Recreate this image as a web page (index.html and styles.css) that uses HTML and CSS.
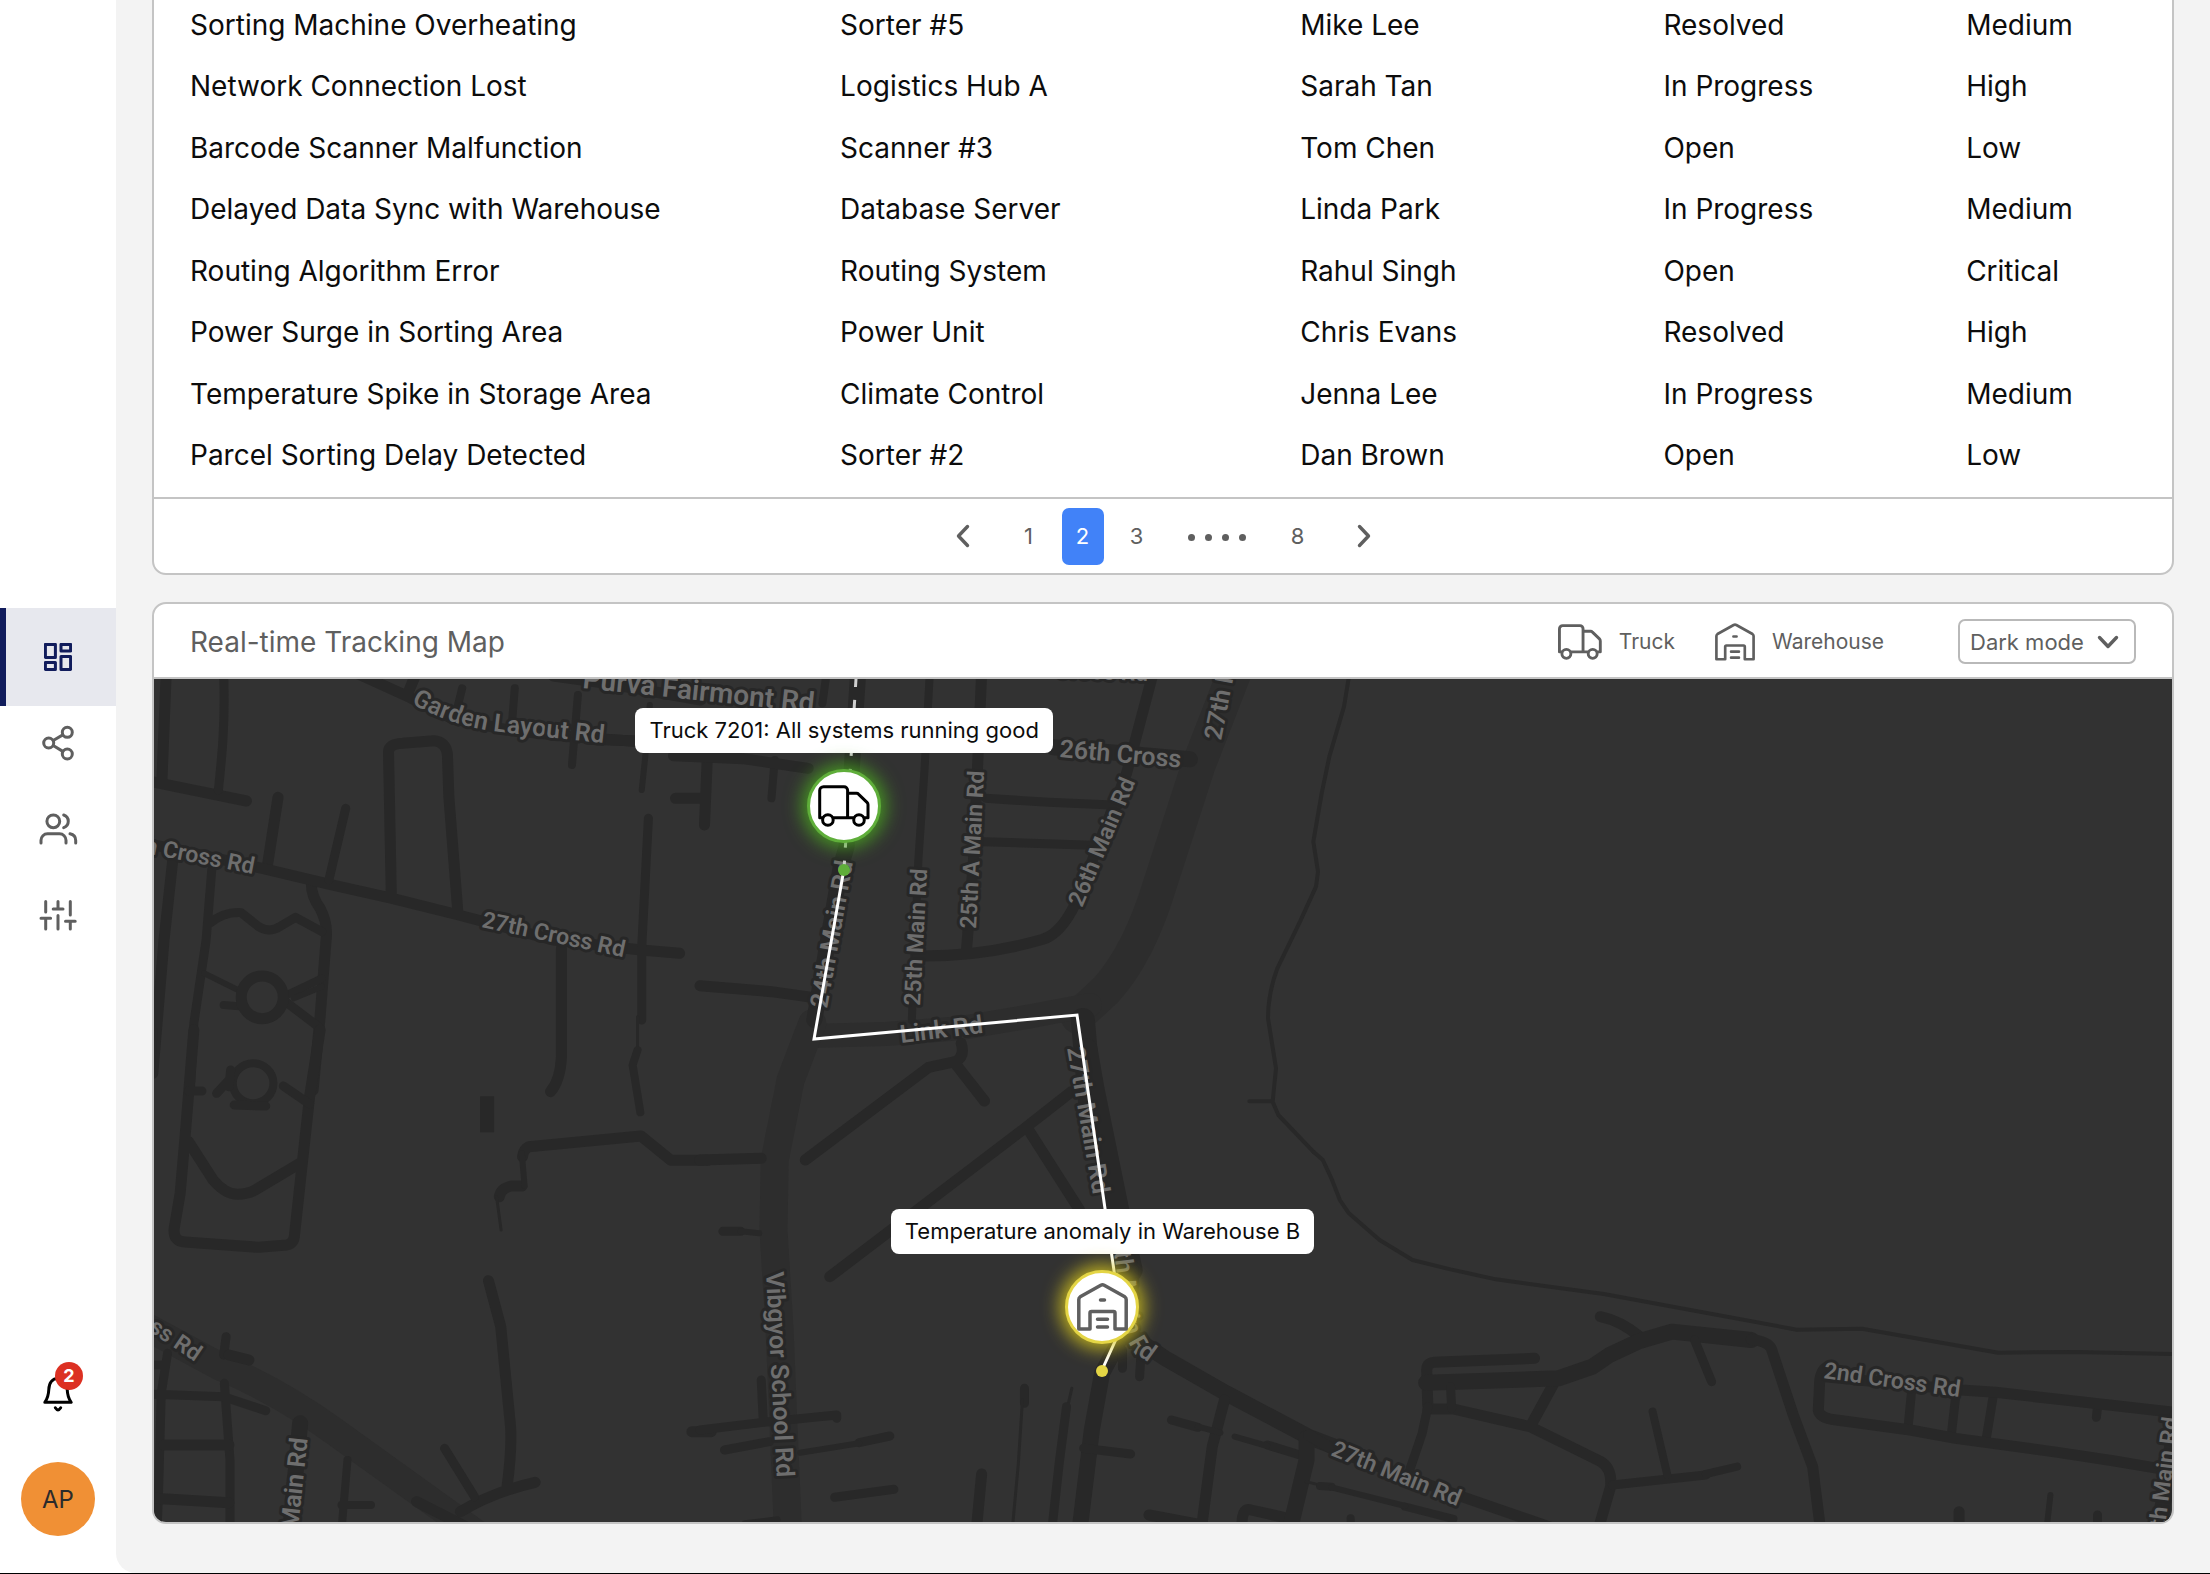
FILE: index.html
```html
<!DOCTYPE html>
<html lang="en">
<head>
<meta charset="utf-8">
<meta name="viewport" content="width=device-width, initial-scale=1">
<title>Operations dashboard</title>
<link rel="stylesheet" href="styles.css">
</head>
<body>
<svg class="sprite" aria-hidden="true">
  <symbol id="truck" viewBox="0 0 52 42">
    <path d="M4.500 32.700H1.700V5.500a3.800 3.800 0 0 1 3.800-3.800H26a3.600 3.600 0 0 1 3.600 3.600V32.700M29.600 8.300H38.500Q39.800 8.300 40.700 9.300L49 17.300Q50 18.300 50 19.800V32.700H46.800M15.500 32.700H35.200"/>
    <circle cx="9.900" cy="35" r="5.300"/><circle cx="41" cy="35" r="5.300"/>
  </symbol>
  <symbol id="warehouse" viewBox="0 0 51 48">
    <path d="M1.800 46V16.500Q1.800 14.800 3.200 13.800L23.800 2.300Q25.500 1.400 27.200 2.300L47.800 13.800Q49.200 14.800 49.200 16.500V46H38V30Q38 28.500 36.500 28.500H14.500Q13 28.500 13 30V46ZM23.500 17H27.500M20.500 36.300H30.500M20.500 44H30.500"/>
  </symbol>
</svg>

<aside class="sidebar">
  <nav class="nav" aria-label="Primary">
    <a class="nav-item is-active" href="#dashboard" aria-label="Dashboard" aria-current="page">
      <svg class="icon" width="28" height="28" viewBox="0 0 28 28"><rect x="1.400" y="1.400" width="10" height="13"/><rect x="17" y="1.400" width="9.600" height="6.600"/><rect x="1.400" y="19.400" width="10" height="7"/><rect x="17" y="13.600" width="9.600" height="12.800"/></svg>
    </a>
    <a class="nav-item" href="#network" aria-label="Network">
      <svg class="icon" width="36" height="36" viewBox="0 0 36 36"><circle cx="27.300" cy="7.300" r="5"/><circle cx="8.700" cy="18" r="5"/><circle cx="27.300" cy="29" r="5"/><path d="M13.200 15.500 22.800 9.900M13.200 20.500 22.800 26.400"/></svg>
    </a>
    <a class="nav-item" href="#team" aria-label="Team">
      <svg class="icon" width="40" height="36" viewBox="0 0 40 36"><circle cx="15.300" cy="10.300" r="6.400"/><path d="M25.700 4a6.700 6.700 0 0 1 0 12.700M3 32v-2.700a6.500 6.500 0 0 1 6.500-6.500h12a6.500 6.500 0 0 1 6.500 6.500V32M32 22.800c3.700.8 5.700 3.200 5.700 6.700V32"/></svg>
    </a>
    <a class="nav-item" href="#settings" aria-label="Settings">
      <svg class="icon" width="40" height="36" viewBox="0 0 40 36"><path d="M7.700 4.500V15M3 21.300H12.600M7.700 21.300V32M20 4.500V12M15.200 12H25M20 18.500V32M32.300 4.500V18M27.500 24.300H37.200M32.300 24.300V32"/></svg>
    </a>
  </nav>
  <div class="account">
    <button class="bell" type="button" aria-label="Notifications">
      <svg class="icon" width="36" height="42" viewBox="0 0 36 42"><path d="M4.800 30.300C8 26 8.600 22 8.800 17.500 9 10.500 12.500 6.500 18 6.500s9 4 9.200 11c.2 4.500.8 8.500 4 12.800ZM15.300 35.800q2.700 4.200 5.400 0"/></svg>
      <span class="badge">2</span>
    </button>
    <button class="avatar" type="button">AP</button>
  </div>
</aside>

<main class="content">
  <section class="card incidents">
    <table class="table">
      <colgroup><col class="c-issue"><col class="c-asset"><col class="c-owner"><col class="c-status"><col></colgroup>
      <tbody>
        <tr><td>Sorting Machine Overheating</td><td>Sorter #5</td><td>Mike Lee</td><td>Resolved</td><td>Medium</td></tr>
        <tr><td>Network Connection Lost</td><td>Logistics Hub A</td><td>Sarah Tan</td><td>In Progress</td><td>High</td></tr>
        <tr><td>Barcode Scanner Malfunction</td><td>Scanner #3</td><td>Tom Chen</td><td>Open</td><td>Low</td></tr>
        <tr><td>Delayed Data Sync with Warehouse</td><td>Database Server</td><td>Linda Park</td><td>In Progress</td><td>Medium</td></tr>
        <tr><td>Routing Algorithm Error</td><td>Routing System</td><td>Rahul Singh</td><td>Open</td><td>Critical</td></tr>
        <tr><td>Power Surge in Sorting Area</td><td>Power Unit</td><td>Chris Evans</td><td>Resolved</td><td>High</td></tr>
        <tr><td>Temperature Spike in Storage Area</td><td>Climate Control</td><td>Jenna Lee</td><td>In Progress</td><td>Medium</td></tr>
        <tr><td>Parcel Sorting Delay Detected</td><td>Sorter #2</td><td>Dan Brown</td><td>Open</td><td>Low</td></tr>
      </tbody>
    </table>
    <nav class="pager" aria-label="Pagination">
      <button class="page" type="button" aria-label="Previous page"><svg class="icon chevron" width="14" height="24" viewBox="0 0 14 24"><path d="M11.500 2.500 2.500 12l9 9.500"/></svg></button>
      <div class="pages">
        <button class="page" type="button">1</button>
        <button class="page is-current" type="button" aria-current="page">2</button>
        <button class="page" type="button">3</button>
        <span class="dots" aria-hidden="true"><i></i><i></i><i></i><i></i></span>
        <button class="page" type="button">8</button>
      </div>
      <button class="page" type="button" aria-label="Next page"><svg class="icon chevron" width="14" height="24" viewBox="0 0 14 24"><path d="M2.500 2.500 11.500 12l-9 9.500"/></svg></button>
    </nav>
  </section>

  <section class="card">
    <header class="map-header">
      <h2 class="title">Real-time Tracking Map</h2>
      <div class="legend">
        <span class="legend-item"><svg class="icon" width="44" height="36"><use href="#truck"/></svg>Truck</span>
        <span class="legend-item"><svg class="icon" width="40" height="38"><use href="#warehouse"/></svg>Warehouse</span>
      </div>
      <div class="select">
        <select aria-label="Map theme"><option>Dark mode</option><option>Light mode</option></select>
        <svg class="icon chevron" width="22" height="14" viewBox="0 0 22 14"><path d="M2.500 2.500 11 11.500 19.500 2.500"/></svg>
      </div>
    </header>
    <div class="map">
      <svg class="map-canvas" viewBox="154 679 2018 843" preserveAspectRatio="xMidYMid slice" role="img" aria-label="Street map">
        <!-- arterial roads -->
        <g class="road major">
          <g transform="translate(600 660) scale(.40816 .33333)">
            <path class="w34" d="M1560 20 1465 320 1370 680Q1320 880 1240 990L1170 1070"/>
            <path class="w24" d="M510 1128 700 1122 880 1105 1050 1070 1200 1035"/>
          </g>
          <g transform="translate(700 1030) scale(.40816 .33333)">
            <path class="w28" d="M275-20 222 150 183 390 180 600 195 900 205 1200 215 1490"/>
          </g>
          <g transform="translate(150 1030) scale(.35075 .33333)">
            <path class="w28" d="M-20 885 200 1010Q360 1080 520 1200L930 1510"/>
          </g>
        </g>

        <!-- north-west block -->
        <g class="road" transform="translate(150 590) scale(.35075 .33333)">
          <path class="w11" d="M46 255 34 570M-10 572 275 633M365 622 335 825M460 880Q460 920 485 955 508 1000 502 1050L485 1280 465 1500"/>
          <path class="w11" d="M-10 760 320 835 500 880 690 925 880 975 1150 1050 1400 1080 1510 1090M688 920 680 485Q682 462 720 460L810 452Q845 457 848 495L852 620 878 970M66 800 40 1050 8 1450"/>
          <path class="w9" d="M210 255C215 400 205 500 195 600M558 655 510 870M176 840 160 1050 125 1300 115 1500M170 1000Q210 965 260 968L310 1010Q340 1030 370 1010L415 982 490 1025"/>
          <path class="w11" d="M590 250 740 322 860 385 1020 420 1200 440 1400 455 1570 485M1150 258 1300 280 1570 330M755 260 735 310"/>
          <path class="w8" d="M890 295 870 380M1040 295 1032 400M1220 315 1203 525M390 1215 490 1165M210 1245 270 1250"/>
          <path class="w6" d="M1425 345 1412 500 1402 600M155 1150 260 1205M410 1225 490 1190"/>
          <path class="w9" d="M1421 685 1402 1070 1402 1290M380 1230 480 1310"/>
          <path class="w11" d="M1173 1075V1400Q1170 1470 1142 1505"/>
          <path class="w3" d="M1390 1280V1380"/>
          <ellipse class="w11" cx="320" cy="1222" rx="60" ry="64"/>
          <ellipse class="w8" cx="294" cy="1480" rx="58" ry="60"/>
        </g>

        <!-- south-west block -->
        <g class="road" transform="translate(150 1030) scale(.35075 .33333)">
          <path class="w3" d="M18 0 8 140"/>
          <path class="w11" d="M125 0 100 320 86 490 69 595Q65 635 100 636L310 652 390 645Q411 640 412 615L430 440 455 200 485 0M110 335 180 450Q215 493 250 493 280 492 300 480L430 398"/>
          <path class="w9" d="M380 168 455 222M110 183H148M190 190 225 150M230 120 225 170M240 225 330 228"/>
          <path class="square" d="M941 199h40v108h-40z"/>
          <path class="w8" d="M1390 60 1376 105 1398 247"/>
          <path class="w11" d="M1590 391H1485L1400 318 1080 350Q1064 358 1062 380M1060 468 1030 468Q1000 475 996 500M965 752 1000 890 1028 1190Q1032 1260 1018 1370M885 1445Q980 1385 1098 1357"/>
          <path class="w6" d="M1060 370 1068 468"/>
          <path class="w3" d="M988 500 1001 600"/>
          <path class="w9" d="M840 1255 925 1400M217 920 210 975M50 970 32 1090 24 1400 20 1500M0 1005H40M0 1092 210 1100 330 1142M212 1060 228 1290V1500"/>
          <path class="w11" d="M225 975 282 990M40 1245H225M10 1405 225 1418M760 1415 900 1490M1545 1205H1600"/>
          <path class="w16" d="M428 1180 400 1500"/>
          <path class="w8" d="M563 1290 546 1500M546 1425H630"/>
        </g>

        <!-- central block, north -->
        <g class="road" transform="translate(600 660) scale(.40816 .33333)">
          <path class="w16" d="M633 30 604 560 590 620 525 1080M1110 262 1445 298"/>
          <path class="w8" d="M555 40 545 130M808 40 795 330 780 600 764 1080M428 300 420 415"/>
          <path class="w11" d="M935 40 915 600 898 870M1355 40 1290 340 1165 730Q1130 820 1085 838 940 890 780 888M185 415H255M263 290 256 495M245 977 420 995 520 1012M-30 238 95 243"/>
          <path class="w9" d="M945 415 1100 427 1270 436M940 545 1205 556"/>
          <path class="w11" d="M180 287 350 296 510 325"/>
          <path class="w24" d="M1183 1080 1206 1400"/>
        </g>

        <!-- central block, south -->
        <g class="road" transform="translate(700 1030) scale(.40816 .33333)">
          <path class="w11" d="M0 390 150 385M258 390 560 112 625 95Q650 80 640 40M625 100 697 213M910 185 790 300 318 740M805 300 930 540"/>
          <path class="w24" d="M945 60 962 180 1022 540 1055 720"/>
          <path class="w16" d="M1055 720V850L1020 950 985 1030 960 1200 930 1500M1060 920 1140 985 1290 1090 1490 1220 1640 1290"/>
          <path class="w9" d="M1035 960V1015M1080 980 1077 1040M56 604H100M150 1050 155 1170M0 1200 170 1175 335 1155V1165M60 1260 170 1235M390 1238 465 1218M330 1402 475 1378M795 1075V1120M1155 1170 1220 1192M1390 1245 1470 1275M940 1255 1055 1272"/>
          <path class="w11" d="M1285 1110 1255 1250 1228 1500M690 1332 677 1500M1100 1455 1230 1485M1328 1500Q1325 1430 1350 1440L1430 1462"/>
          <path class="w16" d="M1486 1225V1290L1445 1500"/>
          <path class="w6" d="M100 604 145 610M245 1268 390 1240M110 1480 190 1468M1220 1190 1275 1208M1310 1220 1390 1248"/>
          <path class="w3" d="M790 1110 780 1300 765 1500M1485 1355 1600 1390M911 1075 895 1160"/>
          <path class="w9" d="M898 1130 880 1300 862 1500"/>
        </g>

        <!-- boundary track -->
        <g class="road" transform="translate(1240 670) scale(.33333)">
          <path class="w4" d="M330 0 312 110 268 260 245 370 220 515 234 605 228 650 180 755 112 895Q84 970 84 1045L108 1195 98 1295 115 1335 222 1447M28 1294H98"/>
        </g>

        <!-- south-east block -->
        <g class="road" transform="translate(1320 1200) scale(.56754 .33333)">
          <path class="w4" d="M-11-144 5-120 20-65 35 0 50 38 105 120 163 180 230 208 310 238 500 282 840 389 955 386 1195 458 1330 456 1520 463"/>
          <path class="w11" d="M494 350Q530 362 565 412M378 475 200 487Q188 490 188 510L190 620M190 627H235L370 680 495 785Q515 805 512 860L490 990M412 550 372 675M-20 705 30 755 250 890 420 990"/>
          <path class="w16" d="M187 548 420 535 480 500 510 465 560 425 620 395 760 420"/>
          <path class="w11" d="M760 418Q790 425 795 445L835 650 868 800 882 990"/>
          <path class="w9" d="M230 560 232 625M190 620 180 700 158 810M660 420 690 545M515 855 680 825M1042 580 1036 685M1120 590 1112 710M1186 590 1174 715M1370 620 1368 652M1370 945V990"/>
          <path class="w8" d="M586 635 612 825M680 822 735 800M0 858 20 860M150 920 235 957M54 955V990"/>
          <path class="w6" d="M20 862 150 918M1287 885 1280 990"/>
          <path class="w11" d="M895 500Q880 510 880 560L878 630Q880 655 910 660L1040 690 1120 715 1300 757 1400 783 1500 812M890 530 1130 570 1190 577 1340 605 1520 640M1126 935V990"/>
          <path class="w16" d="M1510 650 1478 990"/>
        </g>

        <defs>
          <path id="p-garden" d="M411 703Q450 726 500 732L640 747"/>
          <path id="p-main-s" d="M1114 1252 1119 1290Q1122 1335 1134 1352L1180 1385"/>
        </defs>
        <g class="labels">
          <text class="lg" transform="translate(582 688) rotate(6)">Purva Fairmont Rd</text>
          <text class="md"><textPath href="#p-garden">Garden Layout Rd</textPath></text>
          <text transform="translate(481 927) rotate(12)">27th Cross Rd</text>
          <text transform="translate(253 874) rotate(11)" text-anchor="end">h Cross Rd</text>
          <text class="md" transform="translate(827 1009) rotate(-80)">24th Main Rd</text>
          <text transform="translate(920 1006) rotate(-87)">25th Main Rd</text>
          <text transform="translate(976 929) rotate(-87)">25th A Main Rd</text>
          <text transform="translate(1082 908) rotate(-67)">26th Main Rd</text>
          <text class="md" transform="translate(1221 741) rotate(-79)">27th Main</text>
          <text class="md" transform="translate(1059 757) rotate(5)">26th Cross</text>
          <text transform="translate(1148 681) rotate(2)" text-anchor="end">Cross Rd</text>
          <text class="md" transform="translate(901 1043) rotate(-7)">Link Rd</text>
          <text class="md" transform="translate(1067 1048) rotate(80)">27th Main Rd</text>
          <text class="md"><textPath href="#p-main-s">th Main Rd</textPath></text>
          <text class="md" transform="translate(766 1272) rotate(87)">Vibgyor School Rd</text>
          <text transform="translate(1330 1455) rotate(22)">27th Main Rd</text>
          <text transform="translate(1823 1378) rotate(8)">2nd Cross Rd</text>
          <text transform="translate(2165 1528) rotate(-83)">th Main Rd</text>
          <text class="md" transform="translate(298 1530) rotate(-84)">Main Rd</text>
          <text transform="translate(195 1362) rotate(34)" text-anchor="end">ss Rd</text>
        </g>
        <path class="planned" d="M856 679 844 869"/>
        <path class="route" d="M844 869 814 1039 1077 1015 1122 1326 1102 1370"/>
      </svg>

      <div class="pin pin-truck">
        <span class="tip">Truck 7201: All systems running good</span>
        <span class="disc"><svg class="icon" width="52" height="42"><use href="#truck"/></svg></span>
        <span class="dot"></span>
      </div>
      <div class="pin pin-warehouse">
        <span class="tip">Temperature anomaly in Warehouse B</span>
        <span class="disc"><svg class="icon" width="51" height="48"><use href="#warehouse"/></svg></span>
        <span class="dot"></span>
      </div>
    </div>
  </section>
</main>
</body>
</html>
```
FILE: styles.css
```css
:root {
  --line: #c4c4c4;
  --grey: #5f5f5f;
  --ink: #0c0c0c;
  --navy: #111c5c;
  --blue: #4182f8;
}

* { box-sizing: border-box; }

body {
  margin: 0;
  height: 100vh;
  overflow: hidden;
  display: grid;
  grid-template-columns: 116px minmax(0, 1fr);
  border-bottom: 1px solid #000;
  background: #fff;
  color: var(--ink);
  font-family: Inter, "Liberation Sans", sans-serif;
}

button, select {
  margin: 0;
  padding: 0;
  border: 0;
  background: none;
  color: inherit;
  font: inherit;
}

.sprite { position: absolute; width: 0; height: 0; }

.icon {
  display: block;
  fill: none;
  stroke: currentColor;
  stroke-width: 3;
  stroke-linecap: round;
  stroke-linejoin: round;
}

.chevron { stroke-width: 3.400; }

/* Sidebar */
.sidebar {
  display: grid;
  grid-template-rows: 1fr auto 1fr;
  min-height: 0;
  padding-bottom: 1px;
}

.nav { grid-row: 2; }

.nav-item {
  display: flex;
  align-items: center;
  justify-content: center;
  height: 86px;
  color: var(--grey);
}

.nav-item.is-active {
  height: 98px;
  margin: -6px 0;
  background: #e7e8ee;
  color: var(--navy);
  box-shadow: inset 6px 0 var(--navy);
}

.account {
  grid-row: 3;
  display: flex;
  flex-direction: column;
  align-items: center;
  justify-content: flex-end;
  gap: 48px;
  padding-bottom: 36px;
}

.bell { position: relative; color: #000; }

.badge {
  position: absolute;
  left: 15px;
  top: -10px;
  width: 28px;
  height: 28px;
  border-radius: 50%;
  background: #dc3022;
  color: #fff;
  font-size: 18px;
  font-weight: 700;
  line-height: 28px;
  text-align: center;
}

.avatar {
  width: 74px;
  height: 74px;
  border-radius: 50%;
  background: #f09035;
  color: #2b2b2b;
  font-size: 24px;
  font-weight: 400;
}

/* Content */
.content {
  display: flex;
  flex-direction: column;
  justify-content: flex-end;
  gap: 27px;
  min-height: 0;
  overflow: hidden;
  padding: 0 36px 49px;
  border-bottom-left-radius: 20px;
  background: #f3f3f3;
}

.card {
  flex: none;
  overflow: hidden;
  border: 2px solid var(--line);
  border-radius: 14px;
  background: #fff;
}

.incidents { padding-top: 16px; }

.table {
  width: 100%;
  height: 492px;
  margin-bottom: 11px;
  border-collapse: collapse;
  table-layout: fixed;
  font-size: 28px;
  line-height: 36px;
}

.table td { padding: 0; }
.table td:first-child { padding-left: 36px; }
.c-issue { width: 34%; }
.c-asset { width: 22.800%; }
.c-owner { width: 18%; }
.c-status { width: 15%; }

.pager {
  display: flex;
  align-items: center;
  justify-content: center;
  gap: 24px;
  height: 76px;
  border-top: 2px solid var(--line);
  color: var(--grey);
  font-size: 22px;
}

.pages { display: flex; gap: 12px; }

.page {
  display: flex;
  align-items: center;
  justify-content: center;
  width: 42px;
  height: 57px;
  border-radius: 7px;
}

.page.is-current { background: var(--blue); color: #fff; }

.dots {
  display: flex;
  align-items: center;
  justify-content: center;
  gap: 10px;
  width: 95px;
  padding-top: 2px;
}

.dots i {
  width: 7px;
  height: 7px;
  border-radius: 50%;
  background: var(--grey);
}

/* Map card */
.map-header {
  display: flex;
  align-items: center;
  height: 75px;
  padding: 2px 36px 0;
  border-bottom: 2px solid var(--line);
  color: var(--grey);
  font-size: 21px;
}

.title {
  margin: 0 auto 0 0;
  font-size: 28px;
  font-weight: 400;
}

.legend { display: flex; gap: 40px; margin-right: 74px; }
.legend-item { display: flex; align-items: center; gap: 17px; }
.legend .icon { stroke-width: 3.400; }

.select { display: grid; align-items: center; }

.select select {
  grid-area: 1 / 1;
  width: 178px;
  height: 45px;
  padding-left: 10px;
  border: 2px solid #b9b9b9;
  border-radius: 7px;
  font-size: 22px;
  appearance: none;
}

.select .icon {
  grid-area: 1 / 1;
  justify-self: end;
  margin-right: 17px;
  pointer-events: none;
}

.map {
  position: relative;
  aspect-ratio: 2018 / 843;
  background: #323232;
}

.map-canvas { display: block; width: 100%; height: 100%; }

.road {
  fill: none;
  stroke: #282828;
  stroke-linecap: round;
  stroke-linejoin: round;
}

.road path, .road ellipse { vector-effect: non-scaling-stroke; }
.road.major { stroke: #2d2d2d; }
.road .square { fill: #282828; stroke: none; }
.w3 { stroke-width: 3px; }
.w4 { stroke-width: 4px; }
.w6 { stroke-width: 6px; }
.w8 { stroke-width: 8px; }
.w9 { stroke-width: 9px; }
.w11 { stroke-width: 11px; }
.w16 { stroke-width: 16px; }
.w24 { stroke-width: 24px; }
.w28 { stroke-width: 28px; }
.w34 { stroke-width: 34px; }

.labels {
  fill: #6e6e6e;
  stroke: #272727;
  stroke-width: 6px;
  stroke-linejoin: round;
  paint-order: stroke;
  font-family: Roboto, "Liberation Sans", sans-serif;
  font-size: 23px;
  font-weight: 600;
}

.labels .md { font-size: 25px; }
.labels .lg { font-size: 28px; }

.route { fill: none; stroke: #fff; stroke-width: 3px; }

.planned {
  fill: none;
  stroke: #cfcfcf;
  stroke-width: 3px;
  stroke-dasharray: 10 13;
  stroke-dashoffset: 2px;
}

/* Pins sit on the map at a share of its width and height */
.pin {
  position: absolute;
  display: flex;
  flex-direction: column;
  align-items: center;
  width: 0;
  --tone: #5fae3a;
  --glow: rgba(76, 175, 31, .8);
}

.pin-truck { left: 34.200%; top: 3.400%; }

.pin-warehouse {
  left: 47%;
  top: 62.900%;
  --tone: #e4d545;
  --glow: rgba(216, 200, 28, .85);
}

.tip {
  padding: 0 14px;
  border-radius: 8px;
  background: #fff;
  color: var(--ink);
  font-size: 22px;
  line-height: 45px;
  white-space: nowrap;
}

.disc {
  display: flex;
  flex: none;
  align-items: center;
  justify-content: center;
  width: 74px;
  height: 74px;
  margin: 16px 0 21px;
  border: 3px solid var(--tone);
  border-radius: 50%;
  background: #fff;
  box-shadow: 0 0 18px 5px var(--glow);
  color: #000;
}

.pin-warehouse .disc { color: var(--grey); }
.pin-warehouse .icon { stroke-width: 3.500; }

.dot {
  flex: none;
  width: 12px;
  height: 12px;
  border-radius: 50%;
  background: var(--tone);
}
```
